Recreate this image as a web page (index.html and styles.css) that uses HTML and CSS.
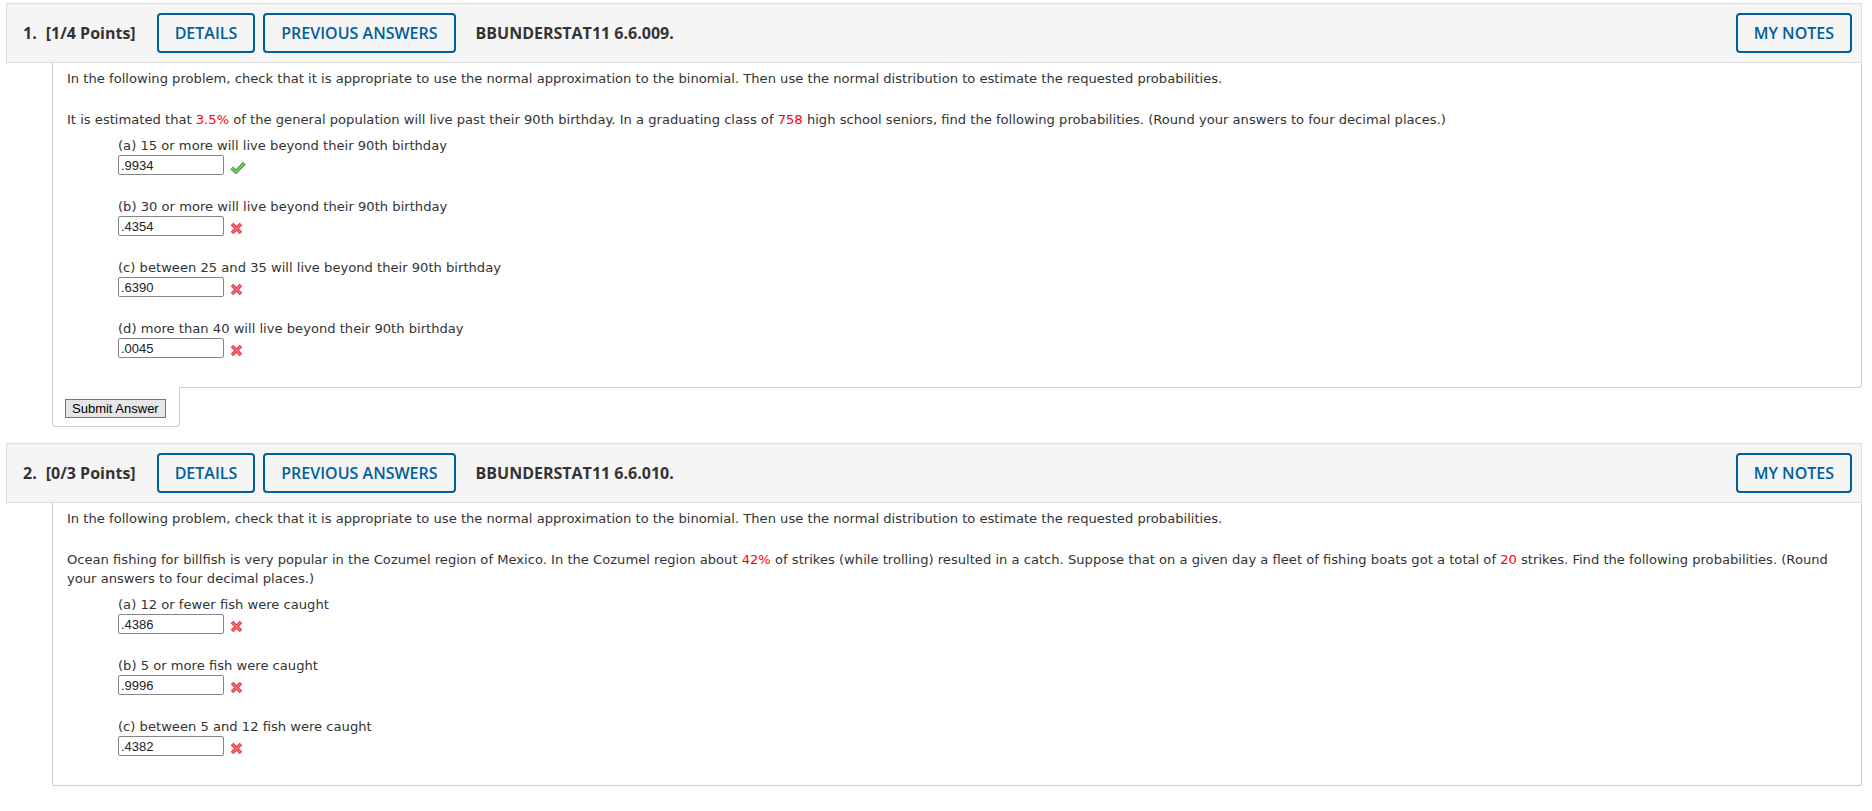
FILE: index.html
```html
<!DOCTYPE html>
<html lang="en">
<head>
<meta charset="utf-8">
<title>Questions</title>
<link rel="stylesheet" href="styles.css">
</head>
<body>
<div class="question">
  <div class="qhead">
    <span class="qnum">1.</span>
    <span class="points">[1/4 Points]</span>
    <button class="btn">DETAILS</button>
    <button class="btn btn-last">PREVIOUS ANSWERS</button>
    <span class="code">BBUNDERSTAT11 6.6.009.</span>
    <button class="btn notes">MY NOTES</button>
  </div>
  <div class="qbody with-tab">
    <p class="intro">In the following problem, check that it is appropriate to use the normal approximation to the binomial. Then use the normal distribution to estimate the requested probabilities.</p>
    <p>It is estimated that <span class="red">3.5%</span> of the general population will live past their 90th birthday. In a graduating class of <span class="red">758</span> high school seniors, find the following probabilities. (Round your answers to four decimal places.)</p>
    <div class="parts">
      <div class="part">
        <div class="plabel">(a) 15 or more will live beyond their 90th birthday</div>
        <div class="answer"><input type="text" value=".9934"><svg class="icon" width="16" height="13" viewBox="0 0 16 13"><path d="M1.6 6.8 L6 10.8 L14.4 2.2" fill="none" stroke="#4d9a3f" stroke-width="3.8"/><path d="M1.6 6.8 L6 10.8 L14.4 2.2" fill="none" stroke="#7fc66c" stroke-width="1.7"/></svg></div>
      </div>
      <div class="part">
        <div class="plabel">(b) 30 or more will live beyond their 90th birthday</div>
        <div class="answer"><input type="text" value=".4354"><svg class="icon" width="13" height="13" viewBox="0 0 13 13"><path d="M2 2 L11 11 M11 2 L2 11" fill="none" stroke="#e53b44" stroke-width="3.6"/><path d="M2.5 2.5 L10.5 10.5 M10.5 2.5 L2.5 10.5" fill="none" stroke="#f27a80" stroke-width="1.1"/></svg></div>
      </div>
      <div class="part">
        <div class="plabel">(c) between 25 and 35 will live beyond their 90th birthday</div>
        <div class="answer"><input type="text" value=".6390"><svg class="icon" width="13" height="13" viewBox="0 0 13 13"><path d="M2 2 L11 11 M11 2 L2 11" fill="none" stroke="#e53b44" stroke-width="3.6"/><path d="M2.5 2.5 L10.5 10.5 M10.5 2.5 L2.5 10.5" fill="none" stroke="#f27a80" stroke-width="1.1"/></svg></div>
      </div>
      <div class="part">
        <div class="plabel">(d) more than 40 will live beyond their 90th birthday</div>
        <div class="answer"><input type="text" value=".0045"><svg class="icon" width="13" height="13" viewBox="0 0 13 13"><path d="M2 2 L11 11 M11 2 L2 11" fill="none" stroke="#e53b44" stroke-width="3.6"/><path d="M2.5 2.5 L10.5 10.5 M10.5 2.5 L2.5 10.5" fill="none" stroke="#f27a80" stroke-width="1.1"/></svg></div>
      </div>
    </div>
  </div>
  <div class="submit-tab"><button class="submit">Submit Answer</button></div>
</div>

<div class="question">
  <div class="qhead">
    <span class="qnum">2.</span>
    <span class="points">[0/3 Points]</span>
    <button class="btn">DETAILS</button>
    <button class="btn btn-last">PREVIOUS ANSWERS</button>
    <span class="code">BBUNDERSTAT11 6.6.010.</span>
    <button class="btn notes">MY NOTES</button>
  </div>
  <div class="qbody">
    <p class="intro">In the following problem, check that it is appropriate to use the normal approximation to the binomial. Then use the normal distribution to estimate the requested probabilities.</p>
    <p>Ocean fishing for billfish is very popular in the Cozumel region of Mexico. In the Cozumel region about <span class="red">42%</span> of strikes (while trolling) resulted in a catch. Suppose that on a given day a fleet of fishing boats got a total of <span class="red">20</span> strikes. Find the following probabilities. (Round your answers to four decimal places.)</p>
    <div class="parts">
      <div class="part">
        <div class="plabel">(a) 12 or fewer fish were caught</div>
        <div class="answer"><input type="text" value=".4386"><svg class="icon" width="13" height="13" viewBox="0 0 13 13"><path d="M2 2 L11 11 M11 2 L2 11" fill="none" stroke="#e53b44" stroke-width="3.6"/><path d="M2.5 2.5 L10.5 10.5 M10.5 2.5 L2.5 10.5" fill="none" stroke="#f27a80" stroke-width="1.1"/></svg></div>
      </div>
      <div class="part">
        <div class="plabel">(b) 5 or more fish were caught</div>
        <div class="answer"><input type="text" value=".9996"><svg class="icon" width="13" height="13" viewBox="0 0 13 13"><path d="M2 2 L11 11 M11 2 L2 11" fill="none" stroke="#e53b44" stroke-width="3.6"/><path d="M2.5 2.5 L10.5 10.5 M10.5 2.5 L2.5 10.5" fill="none" stroke="#f27a80" stroke-width="1.1"/></svg></div>
      </div>
      <div class="part">
        <div class="plabel">(c) between 5 and 12 fish were caught</div>
        <div class="answer"><input type="text" value=".4382"><svg class="icon" width="13" height="13" viewBox="0 0 13 13"><path d="M2 2 L11 11 M11 2 L2 11" fill="none" stroke="#e53b44" stroke-width="3.6"/><path d="M2.5 2.5 L10.5 10.5 M10.5 2.5 L2.5 10.5" fill="none" stroke="#f27a80" stroke-width="1.1"/></svg></div>
      </div>
    </div>
  </div>
</div>
</body>
</html>
```

FILE: styles.css
```css
* {
  box-sizing: border-box;
}

body {
  margin: 0;
  padding: 3px 10px 0 6px;
  background: #ffffff;
  font-family: "DejaVu Sans", Verdana, sans-serif;
  font-size: 13.12px;
  color: #333333;
}

.question {
  margin-bottom: 16px;
}

.qhead {
  display: flex;
  align-items: center;
  background: #f5f5f5;
  border: 1px solid #dddddd;
  padding: 9px 9px 9px 16px;
  font-family: "Open Sans", sans-serif;
  font-size: 16px;
  font-weight: 700;
  color: #333333;
}

.qnum {
  margin-right: 9px;
}

.points {
  margin-right: 21px;
}

.btn {
  height: 40px;
  display: flex;
  align-items: center;
  padding: 0 16px;
  margin: 0 8px 0 0;
  border: 2px solid #00609c;
  border-radius: 4px;
  background: transparent;
  color: #00609c;
  font-family: "Open Sans", sans-serif;
  font-size: 16px;
  font-weight: 600;
}

.btn-last {
  margin-right: 20px;
}

.notes {
  margin-left: auto;
  margin-right: 0;
}

.qbody {
  margin-left: 46px;
  border: 1px solid #cccccc;
  border-top: none;
  border-radius: 0 0 3px 3px;
  padding: 6px 14px 29px 14px;
  line-height: 19px;
}

.qbody.with-tab {
  border-radius: 0 0 3px 0;
}

.qbody p {
  margin: 0;
}

.qbody p.intro {
  margin-bottom: 22px;
}

.red {
  color: #ff0000;
}

.parts {
  margin-top: 7px;
  margin-left: 51px;
}

.part + .part {
  margin-top: 22px;
}

.answer {
  display: flex;
  align-items: center;
  height: 20px;
}

.answer input {
  width: 106px;
  height: 20px;
  margin: 0;
  padding: 0 2px;
  border: 1px solid #858585;
  border-radius: 2px;
  font-family: "Liberation Sans", Arial, sans-serif;
  font-size: 13px;
  color: #222222;
  background: #ffffff;
}

.icon {
  margin-left: 6px;
  margin-top: 5px;
  display: block;
}

.submit-tab {
  position: relative;
  margin-left: 46px;
  margin-top: -1px;
  width: 128px;
  border: 1px solid #cccccc;
  border-top: none;
  border-radius: 0 0 4px 4px;
  background: #ffffff;
  padding: 12px 0 8px 12px;
}

.submit {
  display: block;
  height: 19px;
  margin: 0;
  padding: 0 6px;
  border: 1px solid #767676;
  border-radius: 0;
  background: #e6e6e6;
  color: #000000;
  font-family: "Liberation Sans", Arial, sans-serif;
  font-size: 13px;
  line-height: 17px;
}
```
